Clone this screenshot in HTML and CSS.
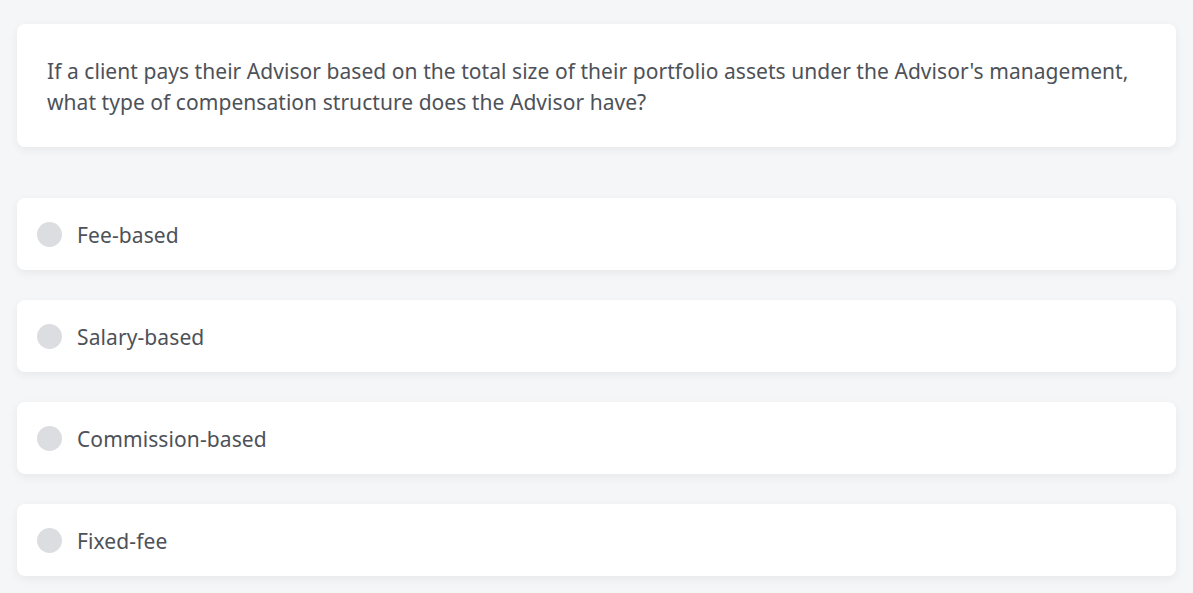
FILE: index.html
```html
<!DOCTYPE html>
<html>
<head>
<meta charset="utf-8">
<link rel="stylesheet" href="styles.css">
</head>
<body>
<div class="page">
  <div class="question-card">
    <p class="question">If a client pays their Advisor based on the total size of their portfolio assets under the Advisor's management, what type of compensation structure does the Advisor have?</p>
  </div>
  <div class="options">
    <label class="option"><span class="radio"></span><span class="label">Fee-based</span></label>
    <label class="option"><span class="radio"></span><span class="label">Salary-based</span></label>
    <label class="option"><span class="radio"></span><span class="label">Commission-based</span></label>
    <label class="option"><span class="radio"></span><span class="label">Fixed-fee</span></label>
  </div>
</div>
</body>
</html>
```
FILE: styles.css
```css
html, body {
  margin: 0;
  padding: 0;
  background: #f5f6f8;
}
body {
  font-family: "Noto Sans", "Open Sans", sans-serif;
  color: #4d5158;
}
.page {
  padding: 24px 17px 17px 17px;
}
.question-card {
  background: #fff;
  border-radius: 8px;
  padding: 32px 30px 29px 30px;
  box-shadow: 0 3px 10px rgba(0, 0, 0, 0.06);
}
.question {
  margin: 0;
  font-size: 21px;
  letter-spacing: 0.05px;
  line-height: 31px;
}
.options {
  margin-top: 51px;
  display: flex;
  flex-direction: column;
  gap: 30px;
}
.option {
  background: #fff;
  border-radius: 8px;
  height: 72px;
  display: flex;
  align-items: center;
  padding: 0 20px;
  box-shadow: 0 3px 10px rgba(0, 0, 0, 0.06);
  font-size: 21px;
  letter-spacing: 0.1px;
}
.radio {
  width: 25px;
  height: 25px;
  border-radius: 50%;
  background: #dcdde0;
  flex: none;
  margin-right: 15px;
}
.label {
  position: relative;
  top: 1px;
}
```
